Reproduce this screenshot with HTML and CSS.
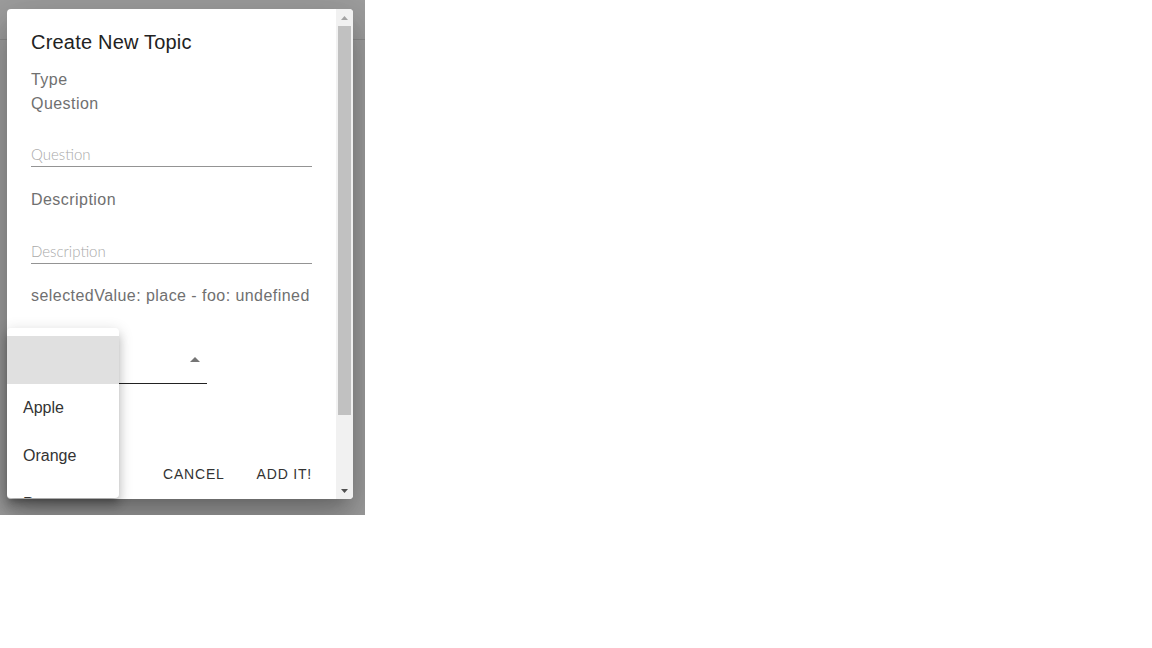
FILE: index.html
```html
<!DOCTYPE html>
<html lang="en">
<head>
<meta charset="utf-8">
<title>Create New Topic</title>
<link rel="stylesheet" href="styles.css">
</head>
<body>
<div class="frame">
  <header class="appbar"></header>
  <div class="overlay"></div>

  <div class="dialog" role="dialog">
    <div class="dialog-body">
      <h2 class="title">Create New Topic</h2>
      <div class="text-block">
        <div class="label">Type</div>
        <div class="label">Question</div>
      </div>
      <div class="field field-first"><span class="placeholder">Question</span></div>
      <div class="label label-desc">Description</div>
      <div class="field"><span class="placeholder">Description</span></div>
      <div class="label label-sel">selectedValue: place - foo: undefined</div>
      <div class="select">
        <div class="select-value"></div>
        <svg class="select-icon" viewBox="0 0 24 24" width="24" height="24"><path d="M7 14l5-5 5 5z" fill="#757575"/></svg>
      </div>
      <div class="actions">
        <button class="btn">Cancel</button>
        <button class="btn">Add it!</button>
      </div>
      <div class="spacer"></div>
    </div>
    <div class="scrollbar">
      <div class="sb-btn"><svg width="7" height="4" viewBox="0 0 7 4"><path d="M0 4L3.5 0 7 4z" fill="#a3a3a3"/></svg></div>
      <div class="sb-track"><div class="sb-thumb"></div></div>
      <div class="sb-btn"><svg width="7" height="4" viewBox="0 0 7 4"><path d="M0 0L3.5 4 7 0z" fill="#505050"/></svg></div>
    </div>
  </div>

  <ul class="menu" role="listbox">
    <li class="menu-item selected">&nbsp;</li>
    <li class="menu-item">Apple</li>
    <li class="menu-item">Orange</li>
    <li class="menu-item">Pear</li>
  </ul>
</div>
</body>
</html>
```

FILE: styles.css
```css
* { box-sizing: border-box; }

html, body {
  margin: 0;
  padding: 0;
  background: #ffffff;
}

body {
  font-family: "Liberation Sans", Arial, sans-serif;
}

.frame {
  position: relative;
  width: 365px;
  height: 515px;
  overflow: hidden;
  background: #ffffff;
}

.appbar {
  height: 40px;
  border-bottom: 1px solid #e2e2e2;
}

.overlay {
  position: absolute;
  inset: 0;
  background: rgba(0, 0, 0, 0.38);
}

.dialog {
  position: absolute;
  left: 7px;
  top: 9px;
  width: 346px;
  height: 490px;
  display: flex;
  background: #ffffff;
  border-radius: 4px;
  overflow: hidden;
  box-shadow: 0 11px 15px -7px rgba(0,0,0,0.2),
              0 24px 38px 3px rgba(0,0,0,0.14),
              0 9px 46px 8px rgba(0,0,0,0.12);
}

.dialog-body {
  flex: 1;
  overflow: hidden;
  padding: 21px 8px 0 24px;
}

.title {
  margin: 0;
  font-size: 20px;
  line-height: 24px;
  font-weight: 400;
  letter-spacing: 0.2px;
  color: #222222;
}

.text-block {
  margin-top: 14px;
}

.label {
  font-size: 16px;
  line-height: 24px;
  letter-spacing: 0.45px;
  color: #707070;
}

.label-desc { margin-top: 21px; }
.label-sel { margin-top: 20px; }

.field {
  margin-top: 29px;
  width: 281px;
  height: 22px;
  padding-bottom: 3px;
  border-bottom: 1px solid #949494;
  font-family: Lato, "Open Sans", sans-serif;
  font-size: 15px;
  line-height: 18px;
}

.label-desc + .field { margin-top: 30px; }

.placeholder {
  color: #a9a9a9;
  font-weight: 300;
}

.select {
  position: relative;
  margin-top: 43px;
  width: 176px;
  height: 33px;
  border-bottom: 1px solid #222222;
}

.select-icon {
  position: absolute;
  right: 0;
  top: -3px;
}

.actions {
  margin-top: 72px;
  display: flex;
  justify-content: flex-end;
}

.btn {
  height: 36px;
  padding: 0 16px;
  border: 0;
  background: transparent;
  font-family: "Liberation Sans", Arial, sans-serif;
  font-size: 14px;
  line-height: 36px;
  letter-spacing: 0.8px;
  text-transform: uppercase;
  color: #333333;
  cursor: pointer;
}

.spacer { height: 80px; }

.scrollbar {
  width: 17px;
  display: flex;
  flex-direction: column;
  background: #f1f1f1;
}

.sb-btn {
  height: 17px;
  display: flex;
  align-items: center;
  justify-content: center;
}

.sb-btn svg { display: block; }

.sb-track {
  flex: 1;
  padding: 0 2px;
}

.sb-thumb {
  height: 389px;
  background: #c1c1c1;
}

.menu {
  position: absolute;
  left: 7px;
  top: 328px;
  width: 112px;
  height: 170px;
  margin: 0;
  padding: 8px 0 0;
  list-style: none;
  overflow: hidden;
  background: #ffffff;
  border-radius: 4px;
  box-shadow: 0 5px 5px -3px rgba(0,0,0,0.2),
              0 8px 10px 1px rgba(0,0,0,0.14),
              0 3px 14px 2px rgba(0,0,0,0.12);
}

.menu-item {
  height: 48px;
  padding: 12px 16px;
  font-size: 16px;
  line-height: 24px;
  color: #333333;
}

.menu-item.selected {
  background: #e0e0e0;
}
```
